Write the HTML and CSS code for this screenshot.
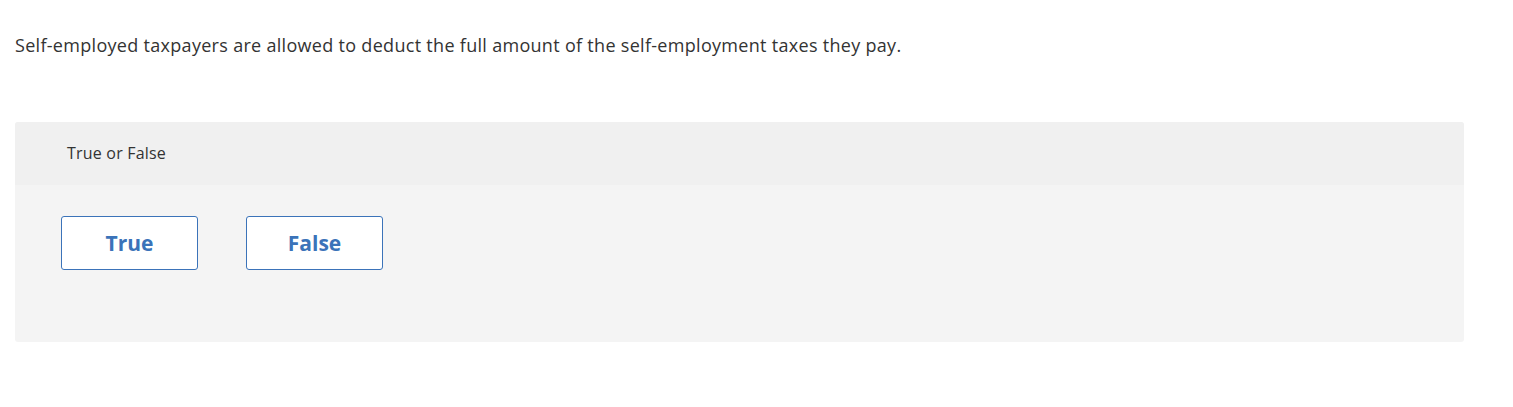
FILE: index.html
```html
<!DOCTYPE html>
<html lang="en">
<head>
  <meta charset="UTF-8">
  <title>True or False</title>
  <link rel="stylesheet" href="styles.css">
</head>
<body>
  <p class="prompt">Self-employed taxpayers are allowed to deduct the full amount of the self-employment taxes they pay.</p>

  <!-- respuesta: verdadero / falso -->
  <div class="answer">
    <div class="answer-head">True or False</div>
    <div class="answer-body">
      <button class="choice">True</button>
      <button class="choice">False</button>
    </div>
  </div>
</body>
</html>
```

FILE: styles.css
```css
body { margin:0; padding:0 15px; font-family: "Open Sans", sans-serif; color:#333; background:#fff; }
.prompt { margin:0; padding-top:32px; font-size:18px; line-height:26px; letter-spacing:0.3px; }
.answer { width:1449px; margin-top:64px; border-radius:3px; overflow:hidden; background:#f4f4f4; }
.answer-head { height:63px; background:#f0f0f0; padding-left:52px; font-size:16px; line-height:63px; letter-spacing:0.2px; color:#333; }
.answer-body { height:157px; padding:31px 0 0 46px; box-sizing:border-box; display:flex; gap:48px; align-items:flex-start; }
.choice { width:137px; height:54px; background:#fff; border:1px solid #3b73b9; border-radius:3px; color:#3b73b9; font-family:inherit; font-weight:700; font-size:21px; cursor:pointer; }
```
